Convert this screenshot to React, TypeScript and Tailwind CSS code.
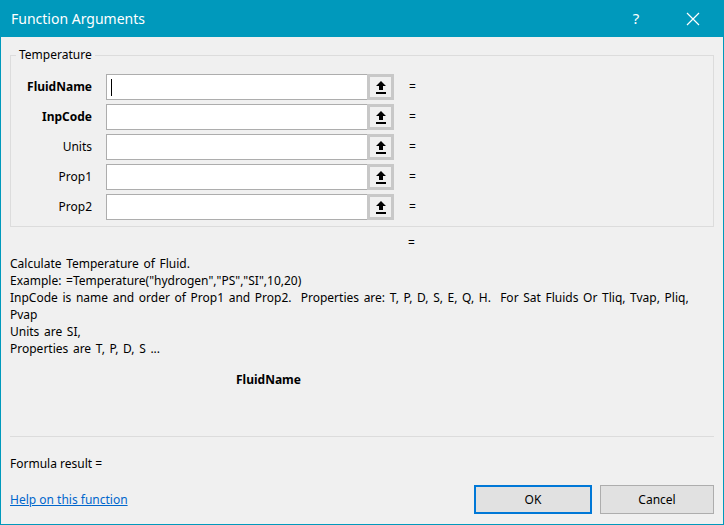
import React from "react";

const rows = [
  { label: "FluidName", bold: true, caret: true },
  { label: "InpCode", bold: true },
  { label: "Units" },
  { label: "Prop1" },
  { label: "Prop2" },
];

const RefIcon = () => (
  <svg width="12" height="14" viewBox="0 0 12 14">
    <path d="M6 1 L11 6 L8 6 L8 10 L4 10 L4 6 L1 6 Z" fill="#000" />
    <rect x="1" y="12" width="10" height="2" fill="#000" />
  </svg>
);

const ArgRow = ({ label, bold, caret }: { label: string; bold?: boolean; caret?: boolean }) => (
  <div className="flex h-[26px] items-center">
    <div className={`w-[81px] text-right ${bold ? "font-bold" : ""}`}>{label}</div>
    <div className="ml-[14px] flex h-[26px] w-[288px] border border-[#adadad] bg-white">
      <div className="flex flex-1 items-center pl-[4px]">
        {caret && <div className="h-[17px] w-px bg-black" />}
      </div>
      <div className="-my-px -mr-px flex w-[27px] items-center justify-center border-[3px] border-[#c8c8c8] bg-[#f0f0f0]">
        <RefIcon />
      </div>
    </div>
    <div className="ml-[15px]">=</div>
  </div>
);

export default function App() {
  return (
    <div
      className="flex h-[525px] w-[724px] flex-col border border-t-0 border-[#0099bc] bg-[#f0f0f0] text-[12px] text-black"
      style={{ fontFamily: '"Noto Sans", "Open Sans", sans-serif' }}
    >
      <div className="-mx-px flex h-[37px] items-center bg-[#0099bc] pl-[11px] text-white">
        <div className="flex-1 text-[14px]">Function Arguments</div>
        <div className="w-[52px] text-center text-[15px]">?</div>
        <div className="flex w-[62px] justify-center">
          <svg width="14" height="14" viewBox="0 0 14 14">
            <path d="M1 1 L13 13 M13 1 L1 13" stroke="#fff" strokeWidth="1.2" />
          </svg>
        </div>
      </div>

      <div className="flex flex-1 flex-col px-[9px]">
        <fieldset className="mt-[10px] border border-[#dcdcdc] pb-[6px] pl-0 pt-[11px]">
          <legend className="ml-[5px] px-[3px] leading-[16px]">Temperature</legend>
          <div className="flex flex-col gap-[4px]">
            {rows.map((r) => (
              <ArgRow key={r.label} {...r} />
            ))}
          </div>
        </fieldset>

        <div className="mt-[7px] pl-[398px] leading-[17px]">=</div>

        <div className="mt-[4px] leading-[17px] [word-spacing:1.5px]">
          <div>Calculate Temperature of Fluid.</div>
          <div>Example: =Temperature("hydrogen","PS","SI",10,20)</div>
          <div>
            InpCode is name and order of Prop1 and Prop2.&nbsp; Properties are: T, P, D, S, E, Q, H.&nbsp; For Sat Fluids Or Tliq, Tvap, Pliq,
          </div>
          <div>Pvap</div>
          <div>Units are SI,</div>
          <div>Properties are T, P, D, S ...</div>
        </div>

        <div className="mt-[14px] pl-[226px] font-bold leading-[17px]">FluidName</div>

        <div className="mt-[48px] border-t border-[#dcdcdc]" />

        <div className="mt-[18px] leading-[17px]">Formula result =</div>

        <div className="mt-[13px] flex items-center">
          <a className="flex-1 text-[#0066cc] underline">Help on this function</a>
          <button className="h-[29px] w-[118px] border-2 border-[#0078d7] bg-[#e1e1e1]">OK</button>
          <button className="ml-[8px] h-[29px] w-[114px] border border-[#adadad] bg-[#e1e1e1]">Cancel</button>
        </div>
      </div>
    </div>
  );
}
